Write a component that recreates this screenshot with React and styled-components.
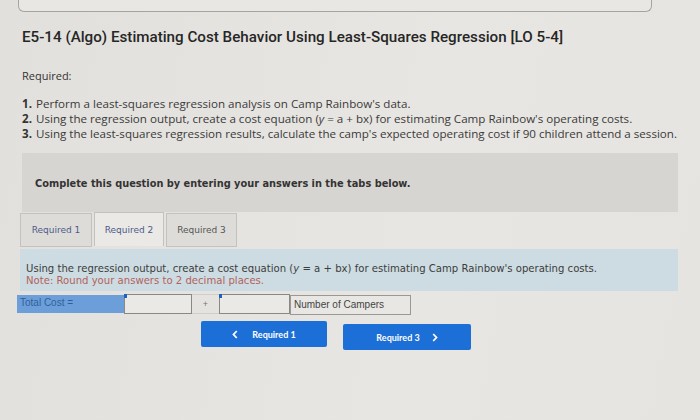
import React from "react";
import styled, { createGlobalStyle } from "styled-components";

const GlobalStyle = createGlobalStyle`
  html, body {
    margin: 0;
    padding: 0;
    background: #e4e2de;
  }
  body {
    font-family: "Roboto", "Liberation Sans", sans-serif;
    color: #2b2b2b;
  }
`;

const Page = styled.div`
  width: 700px;
  height: 420px;
  overflow: hidden;
  background: linear-gradient(100deg, #e2e0dc 0%, #e8e6e2 60%, #e6e4e0 100%);
`;

const TopBox = styled.div`
  margin: -6px 48px 0 18px;
  height: 17px;
  border: 1px solid #a6a4a0;
  border-top: none;
  border-radius: 0 0 6px 6px;
  background: #e9e7e3;
`;

const Content = styled.div`
  padding: 0 22px;
`;

const Title = styled.h1`
  margin: 16px 0 0 0;
  font-family: "Roboto", sans-serif;
  font-size: 15.2px;
  font-weight: 500;
  color: #262626;
`;

const Label = styled.div`
  margin-top: 22px;
  font-family: "Open Sans", sans-serif;
  font-size: 11px;
  color: #333;
`;

const List = styled.ol`
  margin: 13px 0 0 0;
  padding: 0;
  list-style: none;
`;

const Item = styled.li`
  display: flex;
  font-family: "Open Sans", sans-serif;
  font-size: 11.6px;
  line-height: 15px;
  color: #3a3a3a;
  white-space: nowrap;
`;

const Num = styled.span`
  width: 14px;
  font-weight: 700;
  color: #333;
`;

const Instruct = styled.div`
  margin: 12px 0 0 0;
  height: 59px;
  background: #d7d5d1;
  display: flex;
  align-items: center;
  padding: 2px 0 0 13px;
  box-sizing: border-box;
  font-family: "DejaVu Sans", Verdana, sans-serif;
  font-size: 9.8px;
  font-weight: 700;
  color: #333;
`;

const Tabs = styled.div`
  display: flex;
  margin: 0 0 0 -2px;
  gap: 2px;
`;

const Tab = styled.div`
  width: ${(p) => p.w}px;
  height: 34px;
  box-sizing: border-box;
  display: flex;
  align-items: center;
  justify-content: center;
  font-family: "DejaVu Sans", Verdana, sans-serif;
  font-size: 9px;
  color: ${(p) => (p.muted ? "#555" : "#4d5a8a")};
  background: ${(p) => (p.active ? "#ebe9e5" : "#dedcd8")};
  border: 1px solid #c4c2be;
  border-bottom: ${(p) => (p.active ? "none" : "1px solid #c4c2be")};
  margin-top: ${(p) => (p.active ? 0 : 1)}px;
`;

const Panel = styled.div`
  margin: 2px 0 0 -2px;
  height: 42px;
  background: #cddce2;
  padding: 14px 0 0 6px;
  box-sizing: border-box;
  font-family: "DejaVu Sans", Verdana, sans-serif;
  font-size: 10.1px;
  line-height: 11.5px;
  color: #3c3c3c;
  white-space: nowrap;
`;

const Note = styled.div`
  color: #b3625c;
`;

const Row = styled.div`
  display: flex;
  align-items: flex-start;
  margin: 3px 0 0 -5px;
  font-family: "Liberation Sans", Arial, sans-serif;
  font-size: 10px;
`;

const CostCell = styled.div`
  width: 107px;
  height: 18px;
  box-sizing: border-box;
  background: #6c9fd9;
  color: #2f5f99;
  padding: 2px 0 0 3px;
  margin-top: 1px;
`;

const Input = styled.div`
  position: relative;
  width: ${(p) => p.w}px;
  height: 20px;
  box-sizing: border-box;
  background: #ebe9e5;
  border: 1px solid #8a8884;
  &::before {
    content: "";
    position: absolute;
    left: -1px;
    top: -1px;
    width: 3px;
    height: 4px;
    background: #1f5fc0;
  }
`;

const Plus = styled.div`
  width: 27px;
  height: 20px;
  box-sizing: border-box;
  border-top: 1px solid #d0cec9;
  border-bottom: 1px solid #d0cec9;
  display: flex;
  align-items: center;
  justify-content: center;
  color: #777;
  font-size: 9px;
`;

const Unit = styled.div`
  width: 121px;
  height: 20px;
  margin-top: 1px;
  box-sizing: border-box;
  border: 1px solid #9a9894;
  background: #e9e7e3;
  padding: 3px 0 0 3px;
  color: #444;
  font-size: 10px;
`;

const Nav = styled.div`
  display: flex;
  align-items: flex-start;
  gap: 16px;
  margin: 6px 0 0 179px;
`;

const NavButton = styled.button`
  width: ${(p) => p.w}px;
  height: 26px;
  margin-top: ${(p) => p.drop}px;
  border: none;
  border-radius: 2px;
  background: #1b6fd6;
  color: #fff;
  font-family: "Lato", "Roboto", sans-serif;
  font-weight: 700;
  font-size: 9px;
  display: flex;
  align-items: center;
  justify-content: center;
  gap: ${(p) => p.gap}px;
  padding: 0;
`;

const Chevron = ({ dir }) => (
  <svg width="6" height="9" viewBox="0 0 6 9">
    <path
      d={dir === "left" ? "M4.8 1 L1.5 4.5 L4.8 8" : "M1.2 1 L4.5 4.5 L1.2 8"}
      fill="none"
      stroke="#fff"
      strokeWidth="1.8"
    />
  </svg>
);

export default function App() {
  return (
    <Page>
      <GlobalStyle />
      <TopBox />
      <Content>
        <Title>
          E5-14 (Algo) Estimating Cost Behavior Using Least-Squares Regression [LO 5-4]
        </Title>
        <Label>Required:</Label>
        <List>
          <Item>
            <Num>1.</Num>Perform a least-squares regression analysis on Camp Rainbow's data.
          </Item>
          <Item>
            <Num>2.</Num>Using the regression output, create a cost equation (<i>y</i>&nbsp;= a + bx) for
            estimating Camp Rainbow's operating costs.
          </Item>
          <Item>
            <Num>3.</Num>Using the least-squares regression results, calculate the camp's expected
            operating cost if 90 children attend a session.
          </Item>
        </List>
        <Instruct>Complete this question by entering your answers in the tabs below.</Instruct>
        <Tabs>
          <Tab w={72}>Required 1</Tab>
          <Tab w={70} active>
            Required 2
          </Tab>
          <Tab w={71} muted>
            Required 3
          </Tab>
        </Tabs>
        <Panel>
          Using the regression output, create a cost equation (<i>y</i> = a + bx) for estimating
          Camp Rainbow's operating costs.
          <Note>Note: Round your answers to 2 decimal places.</Note>
        </Panel>
        <Row>
          <CostCell>Total Cost =</CostCell>
          <Input w={68} />
          <Plus>+</Plus>
          <Input w={71} />
          <Unit>Number of Campers</Unit>
        </Row>
        <Nav>
          <NavButton w={126} drop={0} gap={14}>
            <Chevron dir="left" />
            Required 1
          </NavButton>
          <NavButton w={128} drop={3} gap={12}>
            Required 3
            <Chevron dir="right" />
          </NavButton>
        </Nav>
      </Content>
    </Page>
  );
}
